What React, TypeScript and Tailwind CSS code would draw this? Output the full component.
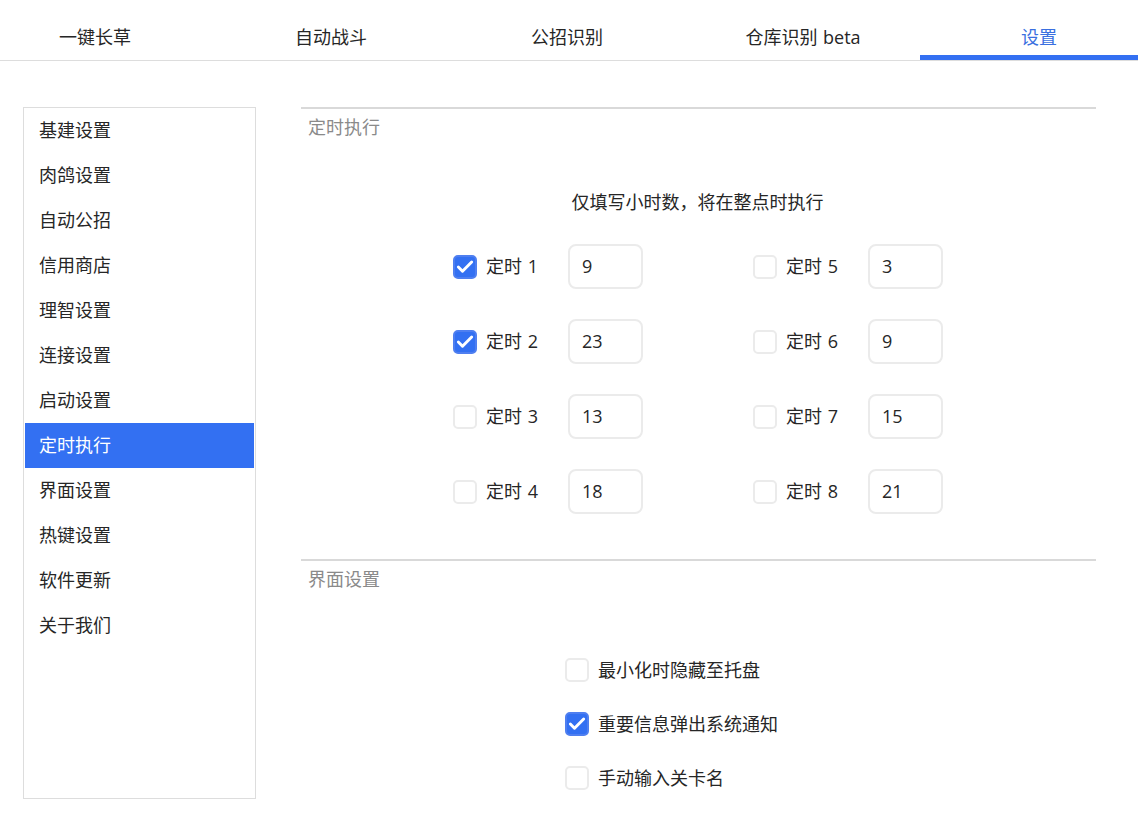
import React from 'react';
import { Check } from 'lucide-react';

const tabs = ['一键长草', '自动战斗', '公招识别', '仓库识别 beta', '设置'];
const menu = ['基建设置', '肉鸽设置', '自动公招', '信用商店', '理智设置', '连接设置', '启动设置', '定时执行', '界面设置', '热键设置', '软件更新', '关于我们'];
const timers = [
  { n: 1, v: '9', on: true },
  { n: 5, v: '3', on: false },
  { n: 2, v: '23', on: true },
  { n: 6, v: '9', on: false },
  { n: 3, v: '13', on: false },
  { n: 7, v: '15', on: false },
  { n: 4, v: '18', on: false },
  { n: 8, v: '21', on: false },
];
const options = [
  { label: '最小化时隐藏至托盘', on: false },
  { label: '重要信息弹出系统通知', on: true },
  { label: '手动输入关卡名', on: false },
];

const Box = ({ on }: { on: boolean }) => (
  <span
    className={
      on
        ? 'flex h-6 w-6 shrink-0 items-center justify-center rounded-[5px] border-2 border-[#4f7ff0] bg-[#3370f2] text-white'
        : 'flex h-6 w-6 shrink-0 items-center justify-center rounded-[5px] border-2 border-[#ebebeb] bg-white'
    }
  >
    {on && <Check size={20} strokeWidth={3.5} />}
  </span>
);

const SectionTitle = ({ children }: { children: React.ReactNode }) => (
  <div className="pl-[7px] pt-[5px] text-[18px] leading-[27px] text-[#8a8a8a]">{children}</div>
);

const App: React.FC = () => {
  return (
    <div
      className="h-[826px] w-[1138px] overflow-hidden bg-white text-[18px] text-[#262626] [word-spacing:1px]"
      style={{ fontFamily: '"Open Sans", "Noto Sans CJK SC", sans-serif' }}
    >
      <div className="h-[61px] overflow-hidden border-b border-[#dddddd]">
        <div className="-ml-[23px] flex w-[1180px]">
          {tabs.map((t, i) => (
            <div
              key={t}
              className={
                i === 4
                  ? '-ml-px flex h-[60px] w-[237px] shrink-0 items-center justify-center border-b-[5px] border-[#3370f2] pl-px pt-[19px] text-[#3a6fe0]'
                  : 'flex h-[60px] w-[236px] shrink-0 items-center justify-center pt-[15px]'
              }
            >
              {t}
            </div>
          ))}
        </div>
      </div>

      <div className="flex pt-[46px]">
        <div className="ml-[23px] h-[692px] w-[233px] shrink-0 border border-[#dddddd] px-px">
          {menu.map((m) => (
            <div
              key={m}
              className={
                m === '定时执行'
                  ? 'flex h-[45px] items-center bg-[#3370f2] pl-[14px] text-white'
                  : 'flex h-[45px] items-center pl-[14px]'
              }
            >
              {m}
            </div>
          ))}
        </div>

        <div className="ml-[45px] w-[795px]">
          <section className="h-[452px] border-t-2 border-[#d9d9d9]">
            <SectionTitle>定时执行</SectionTitle>
            <div className="pr-[2px] pt-[48px] text-center leading-[27px]">仅填写小时数，将在整点时执行</div>
            <div className="ml-[152px] mt-[28px] grid w-[490px] grid-cols-[300px_190px] gap-y-[30px]">
              {timers.map((t) => (
                <div key={t.n} className="flex items-center">
                  <Box on={t.on} />
                  <span className="ml-[9px] w-[82px] whitespace-nowrap">定时 {t.n}</span>
                  <div className="flex h-[45px] w-[75px] items-center rounded-lg border-2 border-[#ebebeb] pl-[11px]">
                    <span className="pl-px">{t.v}</span>
                  </div>
                </div>
              ))}
            </div>
          </section>

          <section className="border-t-2 border-[#d9d9d9]">
            <SectionTitle>界面设置</SectionTitle>
            <div className="flex flex-col gap-[30px] pl-[264px] pt-[65px]">
              {options.map((o) => (
                <div key={o.label} className="flex h-6 items-center">
                  <Box on={o.on} />
                  <span className="ml-[9px] whitespace-nowrap">{o.label}</span>
                </div>
              ))}
            </div>
          </section>
        </div>
      </div>
    </div>
  );
};

export default App;
